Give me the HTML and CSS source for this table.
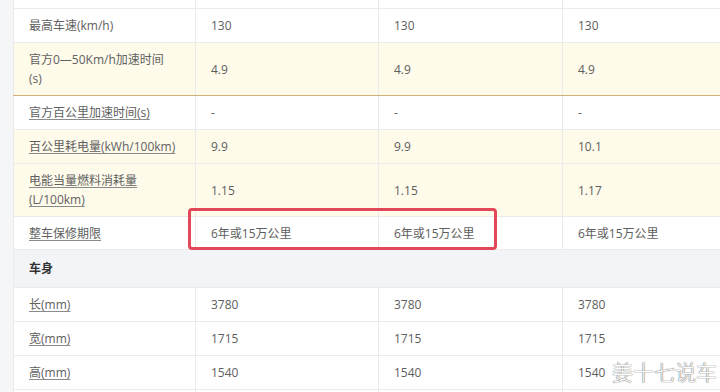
FILE: index.html
```html
<!DOCTYPE html>
<html lang="zh">
<head>
<meta charset="utf-8">
<link rel="stylesheet" href="styles.css">
</head>
<body>
<div class="page">
  <table class="spec">
    <colgroup><col class="c1"><col class="c2"><col class="c3"><col class="c4"></colgroup>
    <tbody>
      <tr class="row partial"><td></td><td></td><td></td><td></td></tr>
      <tr class="row"><td class="label">最高车速(km/h)</td><td>130</td><td>130</td><td>130</td></tr>
      <tr class="row tall hl gold"><td class="label">官方0—50Km/h加速时间<br>(s)</td><td>4.9</td><td>4.9</td><td>4.9</td></tr>
      <tr class="row"><td class="label"><span class="link">官方百公里加速时间(s)</span></td><td>-</td><td>-</td><td>-</td></tr>
      <tr class="row hl"><td class="label"><span class="link">百公里耗电量(kWh/100km)</span></td><td>9.9</td><td>9.9</td><td>10.1</td></tr>
      <tr class="row tall hl"><td class="label"><span class="link">电能当量燃料消耗量(L/100km)</span></td><td>1.15</td><td>1.15</td><td>1.17</td></tr>
      <tr class="row short"><td class="label"><span class="link">整车保修期限</span></td><td>6年或15万公里</td><td>6年或15万公里</td><td>6年或15万公里</td></tr>
      <tr class="section"><td colspan="4">车身</td></tr>
      <tr class="row"><td class="label"><span class="link">长(mm)</span></td><td>3780</td><td>3780</td><td>3780</td></tr>
      <tr class="row"><td class="label"><span class="link">宽(mm)</span></td><td>1715</td><td>1715</td><td>1715</td></tr>
      <tr class="row"><td class="label"><span class="link">高(mm)</span></td><td>1540</td><td>1540</td><td>1540</td></tr>
      <tr class="row"><td class="label"></td><td></td><td></td><td></td></tr>
    </tbody>
  </table>
</div>
<div class="mark"></div>
<div class="watermark">姜十七说车</div>
</body>
</html>
```
FILE: styles.css
```css
html, body {
  margin: 0;
  padding: 0;
}
body {
  width: 720px;
  height: 392px;
  overflow: hidden;
  background: #f5f6f8;
  font-family: "Open Sans", "Noto Sans CJK SC", sans-serif;
  font-size: 12px;
  color: #5e5e5e;
  position: relative;
}
.page {
  padding-left: 13px;
  margin-top: -26px;
}
.spec {
  table-layout: fixed;
  border-collapse: collapse;
  width: 733px;
  background: #fff;
}
.c1 { width: 182px; }
.c2 { width: 183px; }
.c3 { width: 184px; }
.c4 { width: 184px; }
.spec td {
  border: 1px solid #ebebeb;
  padding: 0 15px;
  line-height: 19px;
  vertical-align: middle;
}
.row { height: 34px; }
.row.tall { height: 53px; }
.row.short { height: 33px; }
.row.hl td { background: #fefbeb; }
.row.gold td { border-bottom: 1px solid #cdb36f; }
.label { color: #606060; }
.link {
  text-decoration: underline;
  text-decoration-color: #8a8a8a;
  text-underline-offset: 2px;
}
.section { height: 38px; }
.section td {
  background: #f3f4f7;
  font-weight: bold;
  color: #333;
  font-size: 12px;
}
.mark {
  position: absolute;
  left: 188px;
  top: 208px;
  width: 303px;
  height: 36px;
  border: 3px solid #e2485a;
  border-radius: 4px;
}
.watermark {
  position: absolute;
  left: 612px;
  top: 357px;
  font-family: "Noto Sans CJK SC", sans-serif;
  font-size: 21px;
  font-weight: 300;
  color: #fff;
  line-height: 28px;
  text-shadow: 0 0 1px #777, 0 0 1px #777, 0 0 1px #999;
}
```
